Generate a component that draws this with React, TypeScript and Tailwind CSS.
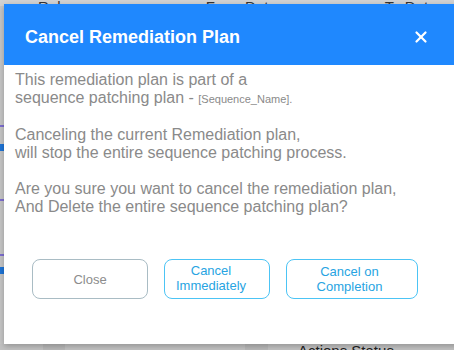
import { X } from "lucide-react";

const font = { fontFamily: '"Liberation Sans", Arial, sans-serif' };

function Backdrop() {
  return (
    <div className="absolute inset-0 bg-[#c6c6c6]">
      <div className="flex h-[6px] items-end overflow-hidden bg-[#d2d2d2] text-[15px] leading-none text-[#333]">
        <span className="ml-[38px] -mb-[8px]">Rule</span>
        <span className="ml-[137px] -mb-[8px]">From Date</span>
        <span className="ml-[108px] -mb-[8px]">To Date</span>
      </div>
      <div className="flex w-[4px] flex-col">
        <div className="mt-[119px] h-[2px] bg-[#7e6fd1]" />
        <div className="mt-[17px] h-[7px] bg-[#1e74d6]" />
        <div className="mt-[48px] h-[2px] bg-[#7e6fd1]" />
        <div className="mt-[53px] h-[2px] bg-[#7e6fd1]" />
        <div className="mt-[11px] h-[7px] bg-[#1e74d6]" />
      </div>
      <div className="absolute bottom-0 left-0 right-0 flex h-[6px] bg-[#c2c2c2]">
        <div className="ml-[43px] w-[22px] bg-[#b8b8b8]" />
        <div className="ml-[180px] w-[23px] bg-[#b8b8b8]" />
        <span className="ml-[30px] text-[15px] leading-[14px] text-[#222]">Actions Status</span>
      </div>
    </div>
  );
}

export default function App() {
  return (
    <div className="relative h-[350px] w-[454px] overflow-hidden" style={font}>
      <Backdrop />
      <div className="absolute left-[4px] top-[4px] flex h-[340px] w-[460px] flex-col bg-white shadow-[0_2px_6px_rgba(0,0,0,0.25)]">
        <div className="flex h-[61px] shrink-0 items-center bg-[#1f88fe] pl-[21px] pt-[4px]">
          <h2 className="text-[18px] font-bold leading-none text-white">Cancel Remediation Plan</h2>
          <X className="ml-[172px] h-[18px] w-[18px] text-white" strokeWidth={3} />
        </div>
        <div className="relative flex flex-1 flex-col pl-[11px] pt-[6px]">
          <div className="absolute right-[6px] top-[55px] h-[127px] w-px bg-[#bdbdbd]" />
          <p className="text-[16px] leading-[18px] text-[#8a8a8a]">
            This remediation plan is part of a
            <br />
            sequence patching plan - <span className="text-[11px]">[Sequence_Name].</span>
            <br />
            <br />
            Canceling the current Remediation plan,
            <br />
            will stop the entire sequence patching process.
            <br />
            <br />
            Are you sure you want to cancel the remediation plan,
            <br />
            And Delete the entire sequence patching plan?
          </p>
          <div className="mt-[43px] flex gap-[16px] pl-[17px] text-[13px] leading-[15px]">
            <button className="flex h-[40px] w-[116px] items-center justify-center rounded-[8px] border border-[#a9bcc4] text-[#8c8c8c]">
              Close
            </button>
            <button className="flex h-[40px] w-[106px] items-center justify-center rounded-[8px] border border-[#4cc4f5] pb-[3px] pr-[12px] text-[#27a4e2]">
              Cancel
              <br />
              Immediately
            </button>
            <button className="flex h-[40px] w-[132px] items-center justify-center rounded-[8px] border border-[#4cc4f5] pr-[5px] text-[#27a4e2]">
              Cancel on
              <br />
              Completion
            </button>
          </div>
        </div>
      </div>
    </div>
  );
}
